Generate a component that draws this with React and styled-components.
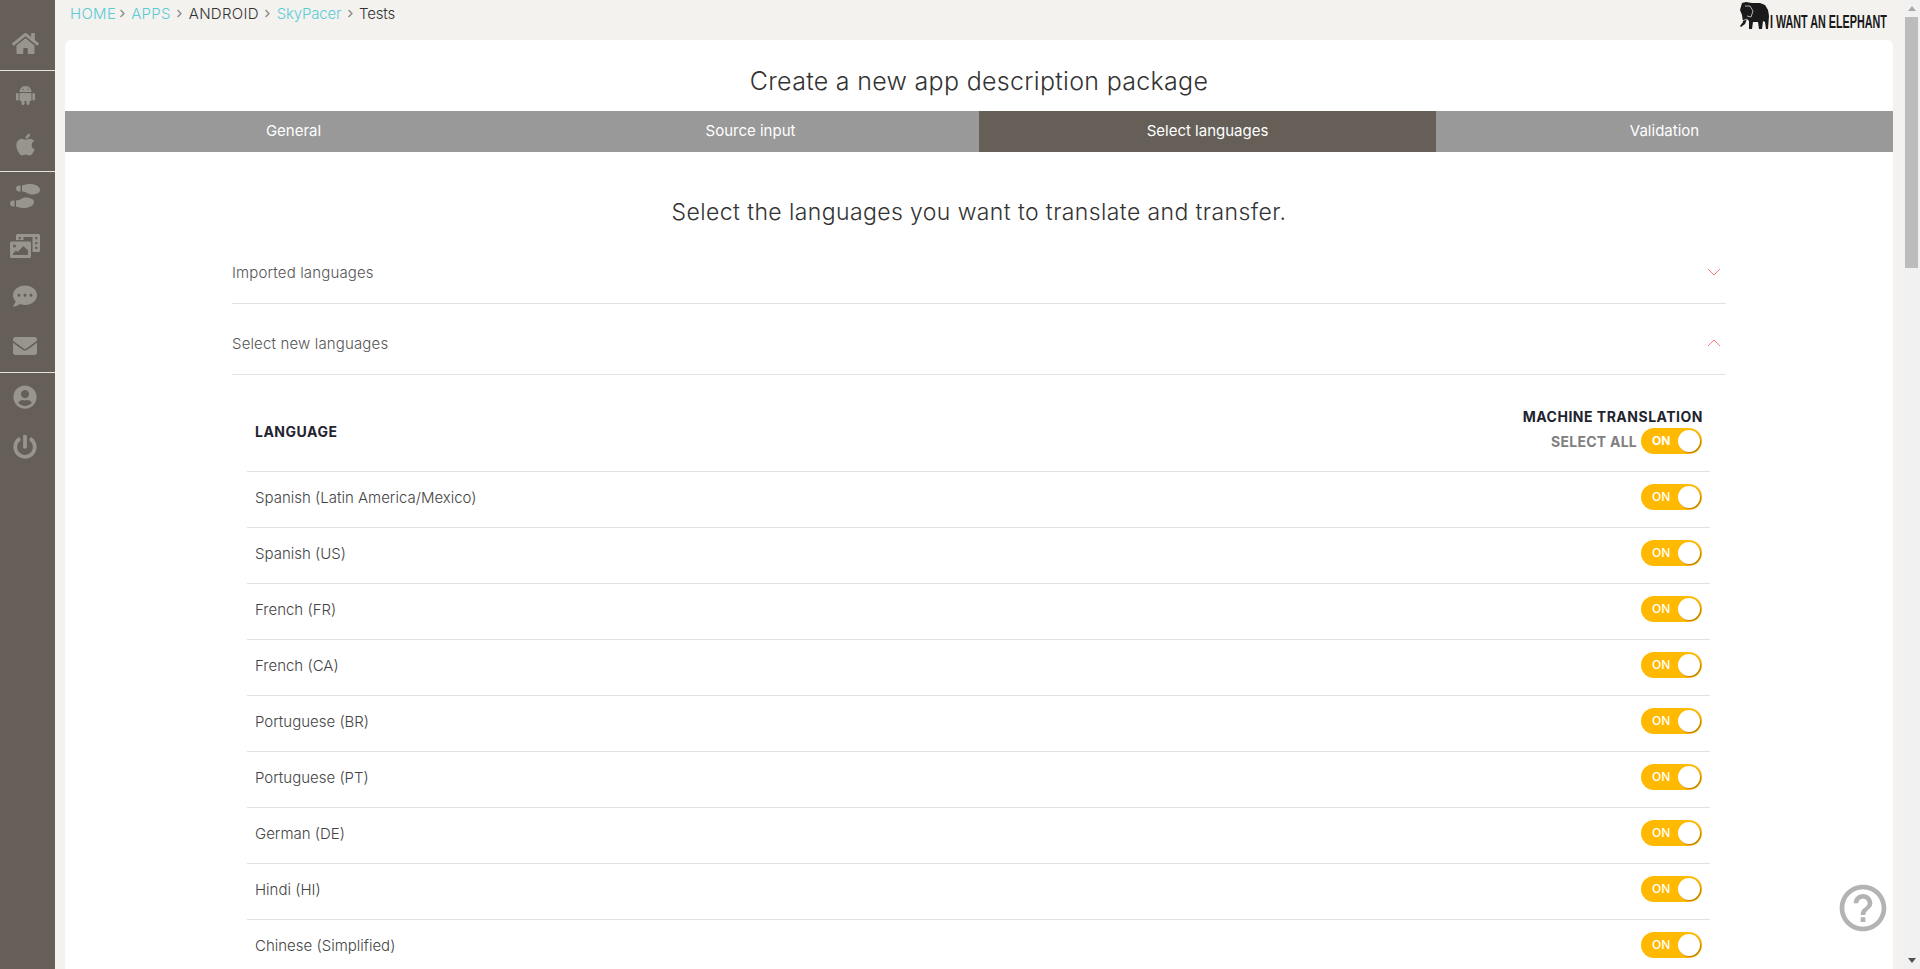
import React from 'react';
import styled, { createGlobalStyle } from 'styled-components';
import {
	FaHome,
	FaApple,
	FaShoePrints,
	FaPhotoVideo,
	FaCommentDots,
	FaEnvelope,
	FaUserCircle,
	FaPowerOff,
	FaChevronRight,
} from 'react-icons/fa';
import { MdHelpOutline } from 'react-icons/md';

const GlobalStyle = createGlobalStyle`
	html, body {
		margin: 0;
		height: 100%;
		overflow: hidden;
	}
	body {
		font-family: Inter, "Open Sans", sans-serif;
		color: #333;
		background-color: #f3f2ef;
	}
`;

const Page = styled.div`
	display: flex;
	height: 100vh;
	overflow: hidden;
`;

const Sidebar = styled.nav`
	flex: 0 0 55px;
	padding-top: 20px;
	background-color: #655f58;
`;

const SideGroup = styled.div`
	border-bottom: ${(p) => (p.$last ? 'none' : '1px solid #e4e3e0')};
`;

const SideItem = styled.a`
	display: flex;
	align-items: center;
	justify-content: center;
	box-sizing: border-box;
	width: 50px;
	height: 50px;
	padding-bottom: 3px;
	color: #98948e;
	font-size: ${(p) => p.$size}px;
`;

const Main = styled.div`
	flex: 1;
	min-width: 0;
	padding: 0 10px;
`;

const ScrollTrack = styled.div`
	flex: 0 0 17px;
	display: flex;
	flex-direction: column;
	align-items: center;
	background-color: #f1f1f1;
`;

const ScrollArrow = styled.div`
	flex: 0 0 17px;
	width: 0;
	height: 0;
	box-sizing: border-box;
	border-left: 4.5px solid transparent;
	border-right: 4.5px solid transparent;
	${(p) =>
		p.$down
			? 'border-top: 5px solid #505050; margin-top: auto; flex-basis: 5px; margin-bottom: 6px;'
			: 'border-bottom: 5px solid #a9a9a9; flex-basis: 5px; margin: 6px 0;'}
`;

const ScrollThumb = styled.div`
	width: 13px;
	height: 251px;
	background-color: #bcbcbc;
`;

const TopBar = styled.div`
	display: flex;
	justify-content: space-between;
	height: 40px;
`;

const Breadcrumb = styled.div`
	display: flex;
	align-items: center;
	height: 27px;
	padding-left: 5px;
	font-size: 15px;
	font-weight: 300;
`;

const Crumb = styled.a`
	color: ${(p) => (p.$link ? '#5ccbd6' : '#333')};
	letter-spacing: ${(p) => (p.$tight ? '-0.2px' : '0.3px')};
`;

const CrumbArrow = styled(FaChevronRight)`
	margin: 0 4.5px 0 ${(p) => p.$left || 4.5}px;
	font-size: 9px;
	color: #8c8c8c;
`;

const Logo = styled.div`
	display: flex;
	align-items: flex-start;
	padding: 2px 5px 0 0;
`;

const LogoText = styled.span`
	display: block;
	width: 118px;
	margin: 10px 0 0 1px;
	font-family: "Liberation Sans", sans-serif;
	font-weight: 700;
	font-size: 19px;
	line-height: 20px;
	color: #1a1a1a;
	white-space: nowrap;
	transform: scaleX(0.567);
	transform-origin: left center;
`;

const Card = styled.div`
	background-color: #fff;
	border-radius: 6px 6px 0 0;
`;

const CardTitle = styled.h1`
	margin: 0;
	padding-top: 12px;
	height: 59px;
	line-height: 59px;
	text-align: center;
	font-size: 25px;
	letter-spacing: 0.3px;
	font-weight: 300;
	color: #333;
`;

const Tabs = styled.div`
	display: grid;
	grid-template-columns: repeat(4, 1fr);
`;

const Tab = styled.div`
	height: 41px;
	line-height: 40px;
	text-align: center;
	font-size: 15px;
	color: #fff;
	background-color: ${(p) => (p.$active ? '#655f58' : '#999')};
`;

const Body = styled.div`
	padding: 0 167px;
`;

const Heading = styled.h2`
	margin: 0;
	padding-top: 44px;
	height: 37px;
	line-height: 32px;
	text-align: center;
	font-size: 23px;
	letter-spacing: 0.4px;
	font-weight: 300;
	color: #333;
`;

const Section = styled.div`
	display: flex;
	align-items: center;
	justify-content: space-between;
	box-sizing: border-box;
	height: 71px;
	padding-top: 8px;
	border-bottom: 1px solid #e2e2e2;
	font-size: 15px;
	letter-spacing: 0.15px;
	font-weight: 300;
	color: #555;

	svg {
		margin-right: 5px;
	}
`;

const Table = styled.div`
	padding: 0 16px 0 15px;
`;

const HeaderRow = styled.div`
	display: flex;
	align-items: center;
	justify-content: space-between;
	box-sizing: border-box;
	height: 97px;
	padding: 16px 7px 0 8px;
	border-bottom: 1px solid #e2e2e2;
`;

const HeaderLabel = styled.span`
	font-size: 14px;
	line-height: 17px;
	letter-spacing: 0.5px;
	font-weight: 700;
	color: #1f2430;
`;

const HeaderRight = styled.div`
	display: flex;
	flex-direction: column;
	align-items: flex-end;
	gap: 3px;
`;

const SelectAll = styled.div`
	display: flex;
	align-items: center;
	gap: 4px;
	padding-right: 1px;
	font-size: 14px;
	letter-spacing: 0.25px;
	font-weight: 700;
	color: #808080;
`;

const Row = styled.div`
	display: flex;
	align-items: center;
	justify-content: space-between;
	box-sizing: border-box;
	height: 56px;
	padding: 0 8px 5px;
	border-bottom: 1px solid #e2e2e2;
	font-size: 15px;
	font-weight: 300;
	color: #444;
`;

const Toggle = styled.div`
	position: relative;
	width: 61px;
	height: 26px;
	border-radius: 13px;
	background-color: #ffb900;
	box-sizing: border-box;
	padding-left: 11px;
	line-height: 26px;
	font-size: 12px;
	letter-spacing: 0;
	font-weight: ${(p) => (p.$bold ? 700 : 500)};
	color: #fff;

	&::after {
		content: '';
		position: absolute;
		top: 2px;
		right: 2px;
		width: 22px;
		height: 22px;
		border-radius: 50%;
		background-color: #fff;
		box-shadow: 1px 1px 1px rgba(120, 80, 0, 0.5);
	}
`;

const HelpButton = styled.a`
	position: fixed;
	left: 1835px;
	top: 880px;
	font-size: 56px;
	line-height: 0;
	color: #b3b3b3;
`;

const languages = [
	'Spanish (Latin America/Mexico)',
	'Spanish (US)',
	'French (FR)',
	'French (CA)',
	'Portuguese (BR)',
	'Portuguese (PT)',
	'German (DE)',
	'Hindi (HI)',
	'Chinese (Simplified)',
];

const AndroidIcon = () => (
	<svg width='19' height='20' viewBox='0 0 19 20' fill='currentColor'>
		<path d='M3.500 7a6 6 0 0 1 12 0z' />
		<path d='M6 0.500l1.500 2.500M13 0.500l-1.500 2.500' stroke='currentColor' strokeWidth='0.7' />
		<circle cx='7' cy='4.500' r='0.7' fill='#655f58' />
		<circle cx='12' cy='4.500' r='0.7' fill='#655f58' />
		<rect x='3.500' y='8' width='12' height='8' rx='1' />
		<rect x='0' y='8' width='2.600' height='7.500' rx='1.300' />
		<rect x='16.400' y='8' width='2.600' height='7.500' rx='1.300' />
		<rect x='5.500' y='14' width='3' height='6' rx='1.500' />
		<rect x='10.500' y='14' width='3' height='6' rx='1.500' />
	</svg>
);

const Elephant = () => (
	<svg width='30' height='28' viewBox='0 0 30 28'>
		<path
			fill='#1a1a1a'
			d='M3 1 7 0 13 1 21 1 26 3 29 8 30 14 29 27 27 27 26 20 24 19 23 27 20 27 19 20 14 20 13 27 10 27 10 19 8 17 6 22 2 25 1 24 4 20 3 13 1 8Z'
		/>
		<path fill='none' stroke='#f3f2ef' strokeWidth='0.7' d='M6 4 11 4 14 9 12 15 8 14M8 17 3 19M16 20 16 27M25 20 25 27' />
	</svg>
);

const App = () => {
	return (
		<Page>
			<GlobalStyle />
			<Sidebar>
				<SideGroup>
					<SideItem $size={27}><FaHome /></SideItem>
				</SideGroup>
				<SideGroup>
					<SideItem><AndroidIcon /></SideItem>
					<SideItem $size={25}><FaApple /></SideItem>
				</SideGroup>
				<SideGroup>
					<SideItem $size={30}><FaShoePrints /></SideItem>
					<SideItem $size={30}><FaPhotoVideo /></SideItem>
					<SideItem $size={24}><FaCommentDots /></SideItem>
					<SideItem $size={24}><FaEnvelope /></SideItem>
				</SideGroup>
				<SideGroup $last>
					<SideItem $size={24}><FaUserCircle /></SideItem>
					<SideItem $size={24}><FaPowerOff /></SideItem>
				</SideGroup>
			</Sidebar>
			<Main>
				<TopBar>
					<Breadcrumb>
						<Crumb $link>HOME</Crumb>
						<CrumbArrow $left={1.5} />
						<Crumb $link>APPS</Crumb>
						<CrumbArrow />
						<Crumb>ANDROID</Crumb>
						<CrumbArrow />
						<Crumb $link $tight>SkyPacer</Crumb>
						<CrumbArrow />
						<Crumb $tight>Tests</Crumb>
					</Breadcrumb>
					<Logo>
						<Elephant />
						<LogoText>I WANT AN ELEPHANT</LogoText>
					</Logo>
				</TopBar>
				<Card>
					<CardTitle>Create a new app description package</CardTitle>
					<Tabs>
						<Tab>General</Tab>
						<Tab>Source input</Tab>
						<Tab $active>Select languages</Tab>
						<Tab>Validation</Tab>
					</Tabs>
					<Body>
						<Heading>Select the languages you want to translate and transfer.</Heading>
						<Section>
							Imported languages
							<svg width='14' height='8' viewBox='0 0 14 8'>
								<path d='M1 1l6 6 6-6' fill='none' stroke='#f77' />
							</svg>
						</Section>
						<Section>
							Select new languages
							<svg width='14' height='8' viewBox='0 0 14 8'>
								<path d='M1 7l6-6 6 6' fill='none' stroke='#f77' />
							</svg>
						</Section>
						<Table>
							<HeaderRow>
								<HeaderLabel>LANGUAGE</HeaderLabel>
								<HeaderRight>
									<HeaderLabel>MACHINE TRANSLATION</HeaderLabel>
									<SelectAll>
										SELECT ALL
										<Toggle $bold>ON</Toggle>
									</SelectAll>
								</HeaderRight>
							</HeaderRow>
							{languages.map((lang) => (
								<Row key={lang}>
									{lang}
									<Toggle>ON</Toggle>
								</Row>
							))}
						</Table>
					</Body>
				</Card>
			</Main>
			<ScrollTrack>
				<ScrollArrow />
				<ScrollThumb />
				<ScrollArrow $down />
			</ScrollTrack>
			<HelpButton><MdHelpOutline /></HelpButton>
		</Page>
	);
};

export default App;
